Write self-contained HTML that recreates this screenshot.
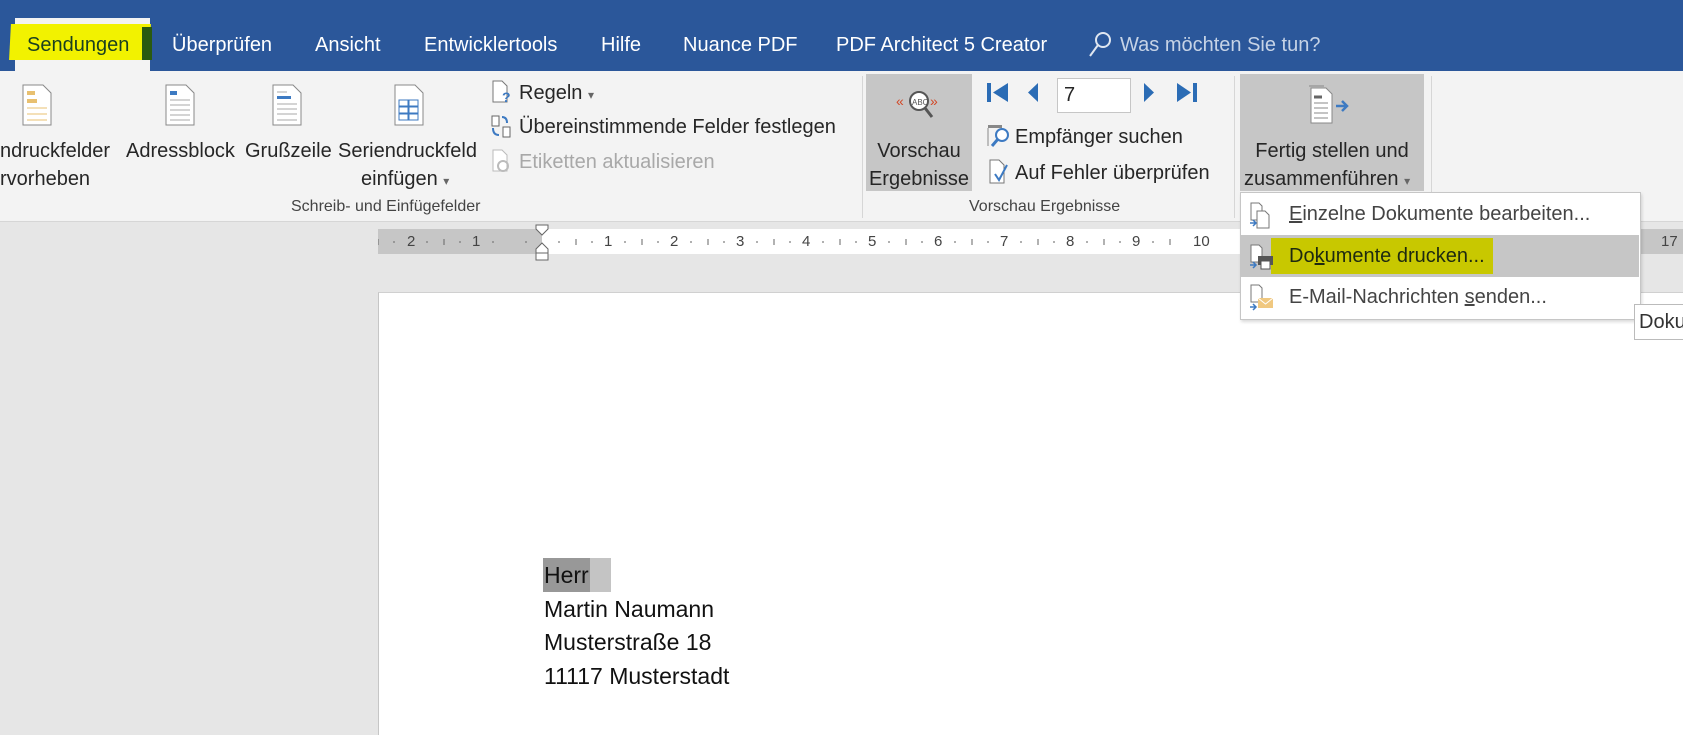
<!DOCTYPE html>
<html><head><meta charset="utf-8"><style>
*{margin:0;padding:0;box-sizing:border-box}
body{width:1683px;height:735px;overflow:hidden;background:#e6e6e6;font-family:"Liberation Sans",sans-serif;position:relative;color:#262626}
.a{position:absolute;white-space:nowrap}
.tab{position:absolute;top:34px;font-size:20px;color:#fff}
.rb{font-size:20px;color:#262626}
</style></head><body>
<div class="a" style="left:0;top:0;width:1683px;height:71px;background:#2b579a"></div>
<div class="a" style="left:15px;top:18px;width:135px;height:53px;background:#f3f3f3"></div>
<div class="a" style="left:10px;top:24px;width:140px;height:36px;background:#f2f200;transform:skewX(-3deg)"></div>
<div class="a" style="left:142px;top:27px;width:10px;height:33px;background:#2a5a10"></div>
<div class="tab" style="left:27px;color:#1a3f20">Sendungen</div>
<div class="tab" style="left:172px">Überprüfen</div>
<div class="tab" style="left:315px">Ansicht</div>
<div class="tab" style="left:424px">Entwicklertools</div>
<div class="tab" style="left:601px">Hilfe</div>
<div class="tab" style="left:683px">Nuance PDF</div>
<div class="tab" style="left:836px">PDF Architect 5 Creator</div>
<svg class="a" style="left:1087px;top:30px" width="26" height="28"><circle cx="16" cy="10" r="7" fill="none" stroke="#dfe6f0" stroke-width="2"/><line x1="11" y1="15" x2="3" y2="26" stroke="#dfe6f0" stroke-width="2"/></svg>
<div class="tab" style="left:1120px;color:#c6d3e6">Was möchten Sie tun?</div>

<div class="a" style="left:0;top:71px;width:1683px;height:151px;background:#f3f3f3;border-bottom:1px solid #d6d6d6"></div>
<svg class="a" style="left:22px;top:84px" width="30" height="42"><path d="M1 1H21L29 9V41H1Z" fill="#fff" stroke="#888"/><rect x="5" y="7" width="8" height="4" fill="#e8c070"/><rect x="5" y="15" width="10" height="4" fill="#e8c070"/><g stroke="#e8c070"><line x1="5" y1="24" x2="25" y2="24"/><line x1="5" y1="30" x2="25" y2="30"/><line x1="5" y1="36" x2="25" y2="36"/></g></svg>
<svg class="a" style="left:165px;top:84px" width="30" height="42"><path d="M1 1H21L29 9V41H1Z" fill="#fff" stroke="#888"/><rect x="5" y="7" width="7" height="4" fill="#3d7ac2"/><g stroke="#aaa"><line x1="5" y1="16" x2="25" y2="16"/><line x1="5" y1="21" x2="25" y2="21"/><line x1="5" y1="26" x2="25" y2="26"/><line x1="5" y1="31" x2="25" y2="31"/><line x1="5" y1="36" x2="25" y2="36"/></g></svg>
<svg class="a" style="left:272px;top:84px" width="30" height="42"><path d="M1 1H21L29 9V41H1Z" fill="#fff" stroke="#888"/><rect x="5" y="12" width="14" height="3" fill="#3d7ac2"/><g stroke="#aaa"><line x1="5" y1="8" x2="15" y2="8"/><line x1="5" y1="20" x2="25" y2="20"/><line x1="5" y1="25" x2="25" y2="25"/><line x1="5" y1="30" x2="25" y2="30"/><line x1="5" y1="36" x2="25" y2="36"/></g></svg>
<svg class="a" style="left:394px;top:84px" width="32" height="42"><path d="M1 1H21L29 9V41H1Z" fill="#fff" stroke="#888"/><g fill="none" stroke="#3d7ac2"><rect x="5" y="16" width="9" height="6"/><rect x="15" y="16" width="9" height="6"/><rect x="5" y="23" width="9" height="6"/><rect x="15" y="23" width="9" height="6"/><rect x="5" y="30" width="9" height="6"/><rect x="15" y="30" width="9" height="6"/></g></svg>
<div class="a rb" style="left:0;top:140px">ndruckfelder</div>
<div class="a rb" style="left:0;top:168px">rvorheben</div>
<div class="a rb" style="left:126px;top:140px">Adressblock</div>
<div class="a rb" style="left:245px;top:140px">Grußzeile</div>
<div class="a rb" style="left:338px;top:140px">Seriendruckfeld</div>
<div class="a rb" style="left:361px;top:168px">einfügen <span style="font-size:12px;color:#666">▾</span></div>
<svg class="a" style="left:492px;top:80px" width="22" height="24"><path d="M1 1H10L15 6V22H1Z" fill="#fff" stroke="#777"/><text x="10" y="22" font-size="14" font-weight="bold" fill="#3d7ac2" font-family="Liberation Sans">?</text></svg>
<div class="a rb" style="left:519px;top:82px">Regeln <span style="font-size:12px;color:#666">▾</span></div>
<svg class="a" style="left:490px;top:114px" width="26" height="26"><rect x="2" y="2" width="7" height="10" fill="#fff" stroke="#666"/><rect x="13" y="13" width="7" height="10" fill="#fff" stroke="#666"/><path d="M12 3Q17 3 17 9M3 14Q3 21 9 21" fill="none" stroke="#3d7ac2" stroke-width="2"/></svg>
<div class="a rb" style="left:519px;top:116px">Übereinstimmende Felder festlegen</div>
<svg class="a" style="left:492px;top:149px" width="22" height="24"><path d="M1 1H10L15 6V22H1Z" fill="#fff" stroke="#bbb"/><circle cx="11" cy="17" r="5" fill="none" stroke="#bbb" stroke-width="2"/></svg>
<div class="a rb" style="left:519px;top:151px;color:#a8a8a8">Etiketten aktualisieren</div>
<div class="a" style="left:291px;top:198px;font-size:16px;color:#444">Schreib- und Einfügefelder</div>
<div class="a" style="left:862px;top:76px;width:1px;height:142px;background:#d6d6d6"></div>
<div class="a" style="left:1234px;top:76px;width:1px;height:142px;background:#d6d6d6"></div>
<div class="a" style="left:1431px;top:76px;width:1px;height:142px;background:#d6d6d6"></div>
<div class="a" style="left:866px;top:74px;width:106px;height:117px;background:#c6c6c6"></div>
<svg class="a" style="left:896px;top:88px" width="46" height="36"><text x="0" y="18" fill="#d24726" font-size="14" font-family="Liberation Sans">«</text><text x="34" y="18" fill="#d24726" font-size="14" font-family="Liberation Sans">»</text><circle cx="23" cy="13" r="9" fill="#fff" stroke="#555" stroke-width="2"/><text x="16" y="17" font-size="8" fill="#555" font-family="Liberation Sans">ABC</text><line x1="29" y1="20" x2="36" y2="29" stroke="#555" stroke-width="3"/></svg>
<div class="a rb" style="left:866px;top:140px;width:106px;text-align:center">Vorschau</div>
<div class="a rb" style="left:866px;top:168px;width:106px;text-align:center">Ergebnisse</div>
<svg class="a" style="left:986px;top:82px" width="220" height="22"><g fill="#2b6cb5"><rect x="1" y="1" width="4" height="19"/><path d="M22 1V20L7 10.5Z"/><path d="M52 1V20L42 10.5Z"/><path d="M158 1V20L168 10.5Z"/><path d="M191 1V20L205 10.5Z"/><rect x="207" y="1" width="4" height="19"/></g></svg>
<div class="a" style="left:1057px;top:78px;width:74px;height:35px;background:#fff;border:1px solid #c6c6c6;font-size:20px;padding:5px 6px">7</div>
<svg class="a" style="left:987px;top:124px" width="26" height="24"><rect x="1" y="1" width="14" height="3" fill="#888"/><path d="M1 4V22" stroke="#888"/><circle cx="15" cy="11" r="6" fill="#fff" stroke="#3d7ac2" stroke-width="2"/><line x1="11" y1="15" x2="5" y2="22" stroke="#3d7ac2" stroke-width="3"/></svg>
<div class="a rb" style="left:1015px;top:126px">Empfänger suchen</div>
<svg class="a" style="left:989px;top:159px" width="22" height="26"><path d="M1 1H10L15 6V24H1Z" fill="#fff" stroke="#777"/><path d="M6 15L10 21L18 6" fill="none" stroke="#3d7ac2" stroke-width="2"/></svg>
<div class="a rb" style="left:1015px;top:162px">Auf Fehler überprüfen</div>
<div class="a" style="left:969px;top:198px;font-size:16px;color:#444">Vorschau Ergebnisse</div>
<div class="a" style="left:1240px;top:74px;width:184px;height:117px;background:#c6c6c6"></div>
<svg class="a" style="left:1308px;top:85px" width="46" height="40"><path d="M3 3H18L24 9V38H3Z" fill="#fff" stroke="#888"/><path d="M1 1H16" stroke="#888"/><g stroke="#888"><line x1="6" y1="12" x2="14" y2="12" stroke="#666" stroke-width="3"/><line x1="6" y1="18" x2="20" y2="18"/><line x1="6" y1="23" x2="20" y2="23"/><line x1="6" y1="28" x2="20" y2="28"/><line x1="6" y1="33" x2="20" y2="33"/></g><path d="M28 21H38M34 16L39 21L34 26" fill="none" stroke="#3d7ac2" stroke-width="2.5"/></svg>
<div class="a rb" style="left:1240px;top:140px;width:184px;text-align:center">Fertig stellen und</div>
<div class="a rb" style="left:1244px;top:168px">zusammenführen <span style="font-size:12px;color:#666">▾</span></div>

<!-- ruler -->
<div class="a" style="left:378px;top:229px;width:1305px;height:25px;background:#c6c6c6"></div>
<div class="a" style="left:542px;top:229px;width:1089px;height:25px;background:#fff"></div>
<div class="a" style="left:378px;top:233px;width:1305px;font-size:15px;color:#444">
<span class="a" style="left:29px">2</span><span class="a" style="left:94px">1</span>
<span class="a" style="left:226px">1</span><span class="a" style="left:292px">2</span><span class="a" style="left:358px">3</span><span class="a" style="left:424px">4</span><span class="a" style="left:490px">5</span><span class="a" style="left:556px">6</span><span class="a" style="left:622px">7</span><span class="a" style="left:688px">8</span><span class="a" style="left:754px">9</span><span class="a" style="left:815px">10</span><span class="a" style="left:1283px">17</span></div>
<svg class="a" style="left:378px;top:236px" width="1305" height="12"><g stroke="#666"><path d="M0 3v6M66 3v6M198 3v6M264 3v6M330 3v6M396 3v6M462 3v6M528 3v6M594 3v6M660 3v6M726 3v6M792 3v6"/></g><g fill="#777"><circle cx="16" cy="6" r="0.9"/><circle cx="49" cy="6" r="0.9"/><circle cx="82" cy="6" r="0.9"/><circle cx="115" cy="6" r="0.9"/><circle cx="148" cy="6" r="0.9"/><circle cx="181" cy="6" r="0.9"/><circle cx="214" cy="6" r="0.9"/><circle cx="247" cy="6" r="0.9"/><circle cx="280" cy="6" r="0.9"/><circle cx="313" cy="6" r="0.9"/><circle cx="346" cy="6" r="0.9"/><circle cx="379" cy="6" r="0.9"/><circle cx="412" cy="6" r="0.9"/><circle cx="445" cy="6" r="0.9"/><circle cx="478" cy="6" r="0.9"/><circle cx="511" cy="6" r="0.9"/><circle cx="544" cy="6" r="0.9"/><circle cx="577" cy="6" r="0.9"/><circle cx="610" cy="6" r="0.9"/><circle cx="643" cy="6" r="0.9"/><circle cx="676" cy="6" r="0.9"/><circle cx="709" cy="6" r="0.9"/><circle cx="742" cy="6" r="0.9"/><circle cx="775" cy="6" r="0.9"/></g></svg>
<svg class="a" style="left:534px;top:224px" width="16" height="38"><path d="M2 1H14V5L8 11L2 5Z M8 19L14 25V29H2V25Z" fill="#fff" stroke="#666"/><rect x="2" y="29" width="12" height="7" fill="#fff" stroke="#666"/></svg>

<!-- page -->
<div class="a" style="left:378px;top:292px;width:1305px;height:443px;background:#fff;border-left:1px solid #c6c6c6;border-top:1px solid #d0d0d0"></div>
<div class="a" style="left:543px;top:558px;width:68px;height:34px;background:#c4c4c4"></div>
<div class="a" style="left:543px;top:558px;width:47px;height:34px;background:#989898"></div>
<div class="a" style="left:544px;top:559px;font-size:23px;line-height:33.5px;color:#111">Herr<br>Martin Naumann<br>Musterstraße 18<br>11117 Musterstadt</div>

<!-- dropdown -->
<div class="a" style="left:1240px;top:192px;width:401px;height:128px;background:#fff;border:1px solid #c6c6c6;box-shadow:1px 2px 3px rgba(0,0,0,.15)"></div>
<div class="a" style="left:1241px;top:235px;width:398px;height:42px;background:#c6c6c6"></div>
<div class="a" style="left:1271px;top:238px;width:222px;height:36px;background:#c8c800"></div>
<svg class="a" style="left:1249px;top:202px" width="26" height="28"><path d="M2 1H10L13 4V18H2Z" fill="#fff" stroke="#777"/><path d="M8 9H16L20 13V26H8Z" fill="#fff" stroke="#777"/><path d="M1 21H6M4 18L7 21L4 24" stroke="#3d7ac2" fill="none" stroke-width="1.5"/></svg>
<div class="a" style="left:1289px;top:203px;font-size:20px;color:#444"><u>E</u>inzelne Dokumente bearbeiten...</div>
<svg class="a" style="left:1249px;top:244px" width="26" height="28"><path d="M2 1H10L13 4V18H2Z" fill="#fff" stroke="#777"/><rect x="9" y="12" width="15" height="9" fill="#555"/><rect x="12" y="17" width="9" height="8" fill="#fff" stroke="#555"/><path d="M1 21H6M4 18L7 21L4 24" stroke="#3d7ac2" fill="none" stroke-width="1.5"/></svg>
<div class="a" style="left:1289px;top:245px;font-size:20px;color:#1e2a10">Do<u>k</u>umente drucken...</div>
<svg class="a" style="left:1249px;top:284px" width="26" height="28"><path d="M2 1H10L13 4V18H2Z" fill="#fff" stroke="#777"/><rect x="9" y="14" width="15" height="10" fill="#f0c880"/><path d="M9 14L16.5 20L24 14" fill="none" stroke="#fff"/><path d="M1 23H6M4 20L7 23L4 26" stroke="#3d7ac2" fill="none" stroke-width="1.5"/></svg>
<div class="a" style="left:1289px;top:286px;font-size:20px;color:#444">E-Mail-Nachrichten <u>s</u>enden...</div>
<div class="a" style="left:1634px;top:304px;width:60px;height:36px;background:#fff;border:1px solid #bbb;font-size:20px;padding:6px 4px;color:#333">Doku</div>
</body></html>
